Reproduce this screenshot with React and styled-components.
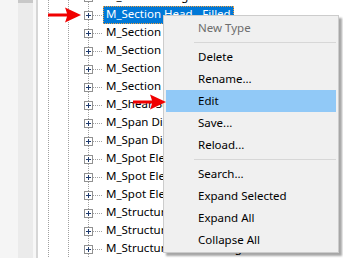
import React from "react";
import styled, { createGlobalStyle, css } from "styled-components";

const Global = createGlobalStyle`
  html, body { margin: 0; padding: 0; background: #ffffff; }
  body { font-family: "Noto Sans", "Liberation Sans", sans-serif; }
  * { box-sizing: border-box; }
`;

const Page = styled.div`
  position: relative;
  width: 343px;
  height: 258px;
  overflow: hidden;
  display: flex;
  background: #ffffff;
`;

const SidePane = styled.div`
  width: 18px;
  flex: none;
  background: #f5f5f5;
`;

const ScrollTrack = styled.div`
  width: 15px;
  flex: none;
  background: #ebebeb;
`;

const ScrollThumb = styled.div`
  height: 3px;
  background: #c8c8c8;
`;

const Spacer = styled.div`
  width: 3px;
  flex: none;
  background: #f7f7f7;
`;

const Divider = styled.div`
  width: 2px;
  flex: none;
  background: #d6d6d6;
`;

const dotsV = "repeating-linear-gradient(to bottom, #a0a0a0 0 1px, transparent 1px 2px)";
const dotsH = "repeating-linear-gradient(to right, #a0a0a0 0 1px, transparent 1px 2px)";

const Tree = styled.div`
  flex: 1;
  background-image: ${dotsV}, ${dotsV};
  background-size: 1px 100%, 1px 100%;
  background-position: 10px 0, 30px 0;
  background-repeat: no-repeat;
  font-size: 11.5px;
  color: #000000;
`;

const TreeList = styled.div`
  margin-top: -12px;
  display: flex;
  flex-direction: column;
`;

const Row = styled.div`
  height: 18px;
  display: flex;
  align-items: center;
  padding-left: 41px;
  white-space: nowrap;
`;

const Expander = styled.div`
  position: relative;
  width: 19px;
  height: 18px;
  flex: none;
  display: flex;
  align-items: center;
  &::before {
    content: "";
    position: absolute;
    left: 9px;
    top: 0;
    width: 1px;
    height: 100%;
    background: ${dotsV};
  }
`;

const PlusBox = styled.div`
  position: relative;
  margin-left: 5px;
  width: 9px;
  height: 9px;
  border: 1px solid #919191;
  background: #ffffff;
  &::before, &::after {
    content: "";
    position: absolute;
    background: #1f3b6e;
  }
  &::before { left: 1px; top: 3px; width: 5px; height: 1px; }
  &::after { left: 3px; top: 1px; width: 1px; height: 5px; }
`;

const Connector = styled.div`
  width: 10px;
  height: 1px;
  flex: none;
  margin-left: -5px;
  background: ${dotsH};
`;

const Label = styled.span`
  display: inline-block;
  height: 18px;
  line-height: 15px;
  padding: 0 3px;
  ${(p) =>
    p.$selected &&
    css`
      background: #0078d7;
      color: #ffffff;
      outline: 1px dotted #f0a040;
      outline-offset: -1px;
    `}
`;

const Menu = styled.div`
  position: absolute;
  left: 163px;
  top: 15px;
  width: 176px;
  padding: 1px 2px 1px 2px;
  background: #f0f0f0;
  border: 1px solid #cccccc;
  box-shadow: 3px 3px 2px rgba(0, 0, 0, 0.35);
  font-size: 11.5px;
  color: #000000;
  display: flex;
  flex-direction: column;
`;

const MenuItem = styled.div`
  height: 22px;
  line-height: 21px;
  padding-left: 32px;
  white-space: nowrap;
  color: ${(p) => (p.$disabled ? "#6d6d6d" : "#000000")};
  background: ${(p) => (p.$active ? "#91c9f7" : "transparent")};
`;

const Separator = styled.div`
  height: 7px;
  display: flex;
  align-items: center;
  padding-left: 28px;
  &::before {
    content: "";
    flex: 1;
    height: 1px;
    background: #d7d7d7;
  }
`;

const ArrowSvg = styled.svg`
  position: absolute;
  overflow: visible;
`;

function Arrow({ left, top, width }) {
  const h = 16;
  const mid = h / 2;
  const head = 14;
  const d = `M0 ${mid - 1.5} L${width - head} ${mid - 1.5} Q${width - head - 1} ${mid - 5} ${width - head - 2} ${mid - 7.5} L${width} ${mid} L${width - head - 2} ${mid + 7.5} Q${width - head - 1} ${mid + 5} ${width - head} ${mid + 1.5} L0 ${mid + 1.5} Z`;
  return (
    <ArrowSvg style={{ left, top }} width={width} height={h} viewBox={`0 0 ${width} ${h}`}>
      <path d={d} fill="#f00000" />
    </ArrowSvg>
  );
}

const rows = [
  "M_Revision Tag",
  "M_Section Head - Filled",
  "M_Section Head - Open",
  "M_Section Tail - Filled",
  "M_Section Tail - Open",
  "M_Section Tail - Wide",
  "M_Shear Stud Tag",
  "M_Span Direction - One Way Slab",
  "M_Span Direction - Two Way Slab",
  "M_Spot Elevation",
  "M_Spot Elevation - Symbol",
  "M_Spot Elevation - Target",
  "M_Structural Area Reinforcement Tag",
  "M_Structural Beam System Tag",
  "M_Structural Column Tag",
];

const menu = [
  { label: "New Type", disabled: true },
  { sep: true },
  { label: "Delete" },
  { label: "Rename..." },
  { label: "Edit", active: true },
  { label: "Save..." },
  { label: "Reload..." },
  { sep: true },
  { label: "Search..." },
  { label: "Expand Selected" },
  { label: "Expand All" },
  { label: "Collapse All" },
];

export default function App() {
  return (
    <>
      <Global />
      <Page>
        <SidePane />
        <ScrollTrack>
          <ScrollThumb />
        </ScrollTrack>
        <Spacer />
        <Divider />
        <Tree>
          <TreeList>
            {rows.map((r, i) => (
              <Row key={r}>
                <Expander>
                  <PlusBox />
                </Expander>
                <Connector />
                <Label $selected={i === 1}>{r}</Label>
              </Row>
            ))}
          </TreeList>
        </Tree>
        <Menu>
          {menu.map((m, i) =>
            m.sep ? (
              <Separator key={i} />
            ) : (
              <MenuItem key={i} $disabled={m.disabled} $active={m.active}>
                {m.label}
              </MenuItem>
            )
          )}
        </Menu>
        <Arrow left={48} top={7} width={33} />
        <Arrow left={133} top={94} width={33} />
      </Page>
    </>
  );
}
